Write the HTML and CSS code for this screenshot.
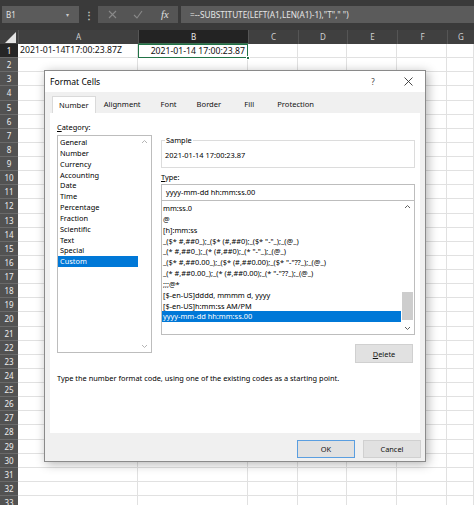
FILE: index.html
```html
<!DOCTYPE html>
<html lang="en">
<head>
    <meta charset="UTF-8">
    <title>Format Cells</title>
    <link rel="stylesheet" href="styles.css">
</head>
<body>
    <div class="toolbar">
        <div class="name-box">
            <span>B1</span>
            <span class="caret">▾</span>
        </div>
        <div class="grip">⋮</div>
        <div class="fx-group">
            <svg class="icon-cancel" width="9" height="9" viewBox="0 0 9 9">
                <path d="M1 1 L8 8 M8 1 L1 8" stroke="#8a8a8a" stroke-width="1.1" fill="none"/>
            </svg>
            <svg class="icon-enter" width="10" height="9" viewBox="0 0 10 9">
                <path d="M1 5 L4 8 L9 1" stroke="#8a8a8a" stroke-width="1.1" fill="none"/>
            </svg>
            <span class="fx">fx</span>
        </div>
        <div class="formula">=--SUBSTITUTE(LEFT(A1,LEN(A1)-1),"T"," ")</div>
    </div>

    <div class="sheet" id="sheet">
        <div class="sheet-row head-row">
            <div class="corner"></div>
            <div class="col-head col-a">A</div>
            <div class="col-head col-b selected">B</div>
            <div class="col-head col-c">C</div>
            <div class="col-head col-d">D</div>
            <div class="col-head col-e">E</div>
            <div class="col-head col-f">F</div>
            <div class="col-head col-g">G</div>
        </div>
        <div class="sheet-row">
            <div class="row-head selected">1</div>
            <div class="cell col-a">2021-01-14T17:00:23.87Z</div>
            <div class="cell col-b active">2021-01-14 17:00:23.87<span class="handle"></span></div>
            <div class="cell col-c"></div>
            <div class="cell col-d"></div>
            <div class="cell col-e"></div>
            <div class="cell col-f"></div>
            <div class="cell col-g"></div>
        </div>
    </div>

    <div class="dialog">
        <div class="title-bar">
            <span class="title">Format Cells</span>
            <span class="help">?</span>
            <span class="close">
                <svg width="9" height="9" viewBox="0 0 9 9">
                    <path d="M0.5 0.5 L8.5 8.5 M8.5 0.5 L0.5 8.5" stroke="#333" stroke-width="0.9" fill="none"/>
                </svg>
            </span>
        </div>

        <div class="tabs">
            <div class="tab active">Number</div>
            <div class="tab">Alignment</div>
            <div class="tab">Font</div>
            <div class="tab">Border</div>
            <div class="tab">Fill</div>
            <div class="tab">Protection</div>
        </div>

        <div class="panel">
            <div class="panel-grid">
                <div class="field-label"><u>C</u>ategory:</div>
                <div class="listbox category-list">
                    <div class="items">
                        <div class="item">General</div>
                        <div class="item">Number</div>
                        <div class="item">Currency</div>
                        <div class="item">Accounting</div>
                        <div class="item">Date</div>
                        <div class="item">Time</div>
                        <div class="item">Percentage</div>
                        <div class="item">Fraction</div>
                        <div class="item">Scientific</div>
                        <div class="item">Text</div>
                        <div class="item">Special</div>
                        <div class="item selected">Custom</div>
                    </div>
                    <div class="scrollbar disabled">
                        <svg class="arrow" width="13" height="12" viewBox="0 0 13 12">
                            <path d="M4 7 L6.5 4.5 L9 7" stroke="currentColor" stroke-width="1" fill="none"/>
                        </svg>
                        <div class="track"></div>
                        <svg class="arrow" width="13" height="12" viewBox="0 0 13 12">
                            <path d="M4 5 L6.5 7.5 L9 5" stroke="currentColor" stroke-width="1" fill="none"/>
                        </svg>
                    </div>
                </div>

                <div class="right-col">
                    <fieldset class="sample">
                        <legend>Sample</legend>
                        <div class="sample-value">2021-01-14 17:00:23.87</div>
                    </fieldset>

                    <div class="type-label"><u>T</u>ype:</div>
                    <div class="type-input">yyyy-mm-dd hh:mm:ss.00</div>
                    <div class="listbox format-list">
                        <div class="items">
                            <div class="item">mm:ss.0</div>
                            <div class="item">@</div>
                            <div class="item">[h]:mm:ss</div>
                            <div class="item">_($* #,##0_);_($* (#,##0);_($* "-"_);_(@_)</div>
                            <div class="item">_(* #,##0_);_(* (#,##0);_(* "-"_);_(@_)</div>
                            <div class="item">_($* #,##0.00_);_($* (#,##0.00);_($* "-"??_);_(@_)</div>
                            <div class="item">_(* #,##0.00_);_(* (#,##0.00);_(* "-"??_);_(@_)</div>
                            <div class="item">;;;@*</div>
                            <div class="item">[$-en-US]dddd, mmmm d, yyyy</div>
                            <div class="item">[$-en-US]h:mm:ss AM/PM</div>
                            <div class="item selected">yyyy-mm-dd hh:mm:ss.00</div>
                        </div>
                        <div class="scrollbar">
                            <svg class="arrow" width="13" height="12" viewBox="0 0 13 12">
                                <path d="M4 7 L6.5 4.5 L9 7" stroke="currentColor" stroke-width="1" fill="none"/>
                            </svg>
                            <div class="track"><div class="thumb"></div></div>
                            <svg class="arrow" width="13" height="12" viewBox="0 0 13 12">
                                <path d="M4 5 L6.5 7.5 L9 5" stroke="currentColor" stroke-width="1" fill="none"/>
                            </svg>
                        </div>
                    </div>
                    <button class="btn btn-delete"><u>D</u>elete</button>
                </div>
            </div>

            <p class="description">Type the number format code, using one of the existing codes as a starting point.</p>
        </div>

        <div class="footer">
            <button class="btn btn-ok">OK</button>
            <button class="btn">Cancel</button>
        </div>
    </div>

    <script>
        // empty rows 2..33 of the sheet
        const sheet = document.getElementById('sheet');
        const cols = ['a', 'b', 'c', 'd', 'e', 'f', 'g'];
        for (let i = 2; i <= 33; i++) {
            const row = document.createElement('div');
            row.className = 'sheet-row';
            row.innerHTML = '<div class="row-head">' + i + '</div>' +
                cols.map(c => '<div class="cell col-' + c + '"></div>').join('');
            sheet.appendChild(row);
        }
    </script>
</body>
</html>
```

FILE: styles.css
```css
* {
    margin: 0;
    padding: 0;
    box-sizing: border-box;
}

body {
    width: 474px;
    height: 505px;
    overflow: hidden;
    position: relative;
    background: #fff;
    font-family: "Noto Sans", "Open Sans", sans-serif;
}

/* formula bar */
.toolbar {
    height: 30px;
    background: #3a3a3a;
    display: flex;
    align-items: center;
    padding: 0 0 1px 2px;
}

.name-box {
    width: 77px;
    height: 17px;
    background: #5b5b5b;
    color: #e2e2e2;
    font-size: 8px;
    display: flex;
    align-items: center;
    justify-content: space-between;
    padding: 0 10px 0 4px;
}

.caret {
    font-size: 6px;
    color: #c8c8c8;
}

.grip {
    width: 19px;
    text-align: center;
    color: #c0c0c0;
    font-size: 10px;
    font-weight: bold;
}

.fx-group {
    width: 80px;
    height: 17px;
    background: #555;
    display: flex;
    align-items: center;
}

.icon-cancel {
    margin-left: 10px;
}

.icon-enter {
    margin-left: 16px;
}

.fx {
    margin-left: 18px;
    font-family: "Liberation Serif", serif;
    font-style: italic;
    font-size: 10.5px;
    color: #e0e0e0;
}

.formula {
    flex: 1;
    margin-left: 3px;
    height: 17px;
    background: #5b5b5b;
    color: #e6e6e6;
    font-size: 8.2px;
    padding-left: 9px;
    display: flex;
    align-items: center;
    white-space: nowrap;
}

/* grid */
.sheet-row {
    display: flex;
    height: 14.13px;
}

.head-row {
    height: 14px;
    background: #404040;
}

.corner {
    width: 18px;
    position: relative;
}

.corner::after {
    content: "";
    position: absolute;
    left: 5px;
    top: 2px;
    width: 11px;
    height: 11px;
    background: #e4e4e4;
    clip-path: polygon(100% 0, 100% 100%, 0 100%);
}

.col-head {
    color: #cfcfcf;
    font-size: 8px;
    line-height: 14px;
    text-align: center;
    border-left: 1px solid #555;
}

.col-head.selected {
    background: #232323;
    color: #e8e8e8;
    border-bottom: 1px solid #3d6e52;
}

.col-a { width: 120px; }
.col-b { width: 110px; }
.col-c { width: 50px; }
.col-d { width: 49px; }
.col-e { width: 50px; }
.col-f { width: 50px; }
.col-g { flex: 1; }

.row-head {
    width: 18px;
    flex-shrink: 0;
    background: #525252;
    color: #ececec;
    font-size: 8px;
    line-height: 13px;
    text-align: center;
    border-bottom: 1px solid #6a6a6a;
}

.row-head.selected {
    background: #262626;
    color: #fff;
}

.cell {
    flex-shrink: 0;
    border-right: 1px solid #e1e1e1;
    border-bottom: 1px solid #e1e1e1;
    font-size: 8.7px;
    line-height: 13px;
    padding: 0 2px;
    white-space: nowrap;
    color: #111;
}

.cell.active {
    position: relative;
    text-align: right;
    border: 1px solid #217346;
}

.handle {
    position: absolute;
    right: -3px;
    bottom: -3px;
    width: 4px;
    height: 4px;
    background: #217346;
    border: 1px solid #fff;
}

/* dialog */
.dialog {
    position: absolute;
    left: 44px;
    top: 70px;
    width: 382px;
    height: 392px;
    background: #f0f0f0;
    border: 1px solid #8a8a8a;
    box-shadow: 2px 2px 10px rgba(0, 0, 0, 0.3);
    font-size: 7.4px;
    color: #000;
    display: flex;
    flex-direction: column;
}

.title-bar {
    height: 21px;
    flex-shrink: 0;
    background: #fff;
    display: flex;
    align-items: center;
    padding: 0 2px 0 5px;
    font-size: 8.6px;
}

.title {
    flex: 1;
}

.help {
    width: 20px;
    margin-right: 10px;
    text-align: center;
    color: #444;
    font-size: 8px;
}

.close {
    width: 30px;
    display: flex;
    justify-content: center;
}

.tabs {
    height: 21px;
    flex-shrink: 0;
    display: flex;
    align-items: flex-end;
    padding-left: 7px;
    font-size: 7.6px;
}

.tab {
    height: 17px;
    line-height: 17px;
    min-width: 40px;
    padding: 0 8px;
    text-align: center;
    color: #111;
}

.tab.active {
    min-width: 0;
    padding: 0 6px;
    background: #fff;
    border: 1px solid #dadada;
    border-bottom: none;
    line-height: 16px;
}

.panel {
    height: 320px;
    flex-shrink: 0;
    margin: 0 5px;
    background: #fff;
    padding: 8px 5px 0 7px;
}

.panel-grid {
    display: grid;
    grid-template-columns: 95px 254px;
    grid-template-rows: 14px auto;
    column-gap: 9px;
    align-items: start;
}

.field-label {
    grid-column: 1 / 3;
    line-height: 13px;
}

.listbox {
    display: flex;
    border: 1px solid #bdbdbd;
    background: #fff;
}

.items {
    flex: 1;
    padding-top: 1px;
    overflow: hidden;
}

.item {
    height: 10.85px;
    line-height: 10.85px;
    padding-left: 2px;
    white-space: nowrap;
}

.item.selected {
    background: #0078d7;
    color: #fff;
}

.category-list {
    height: 218px;
}

.scrollbar {
    width: 13px;
    display: flex;
    flex-direction: column;
    color: #606060;
}

.scrollbar.disabled {
    color: #b4b4b4;
}

.track {
    flex: 1;
    display: flex;
    flex-direction: column;
    justify-content: flex-end;
    padding: 0 1px 2px;
}

.thumb {
    height: 28px;
    background: #cdcdcd;
}

.right-col {
    display: flex;
    flex-direction: column;
}

.sample {
    border: 1px solid #dcdcdc;
    padding: 0 3px 5px 3px;
    height: 33px;
}

.sample legend {
    padding: 0 1px;
    line-height: 11px;
}

.sample-value {
    margin: 4px 0 0 0;
    line-height: 11px;
}

.type-label {
    margin-top: 3px;
    line-height: 13px;
}

.type-input {
    height: 17px;
    border: 1px solid #bdbdbd;
    padding-left: 4px;
    line-height: 15px;
}

.format-list {
    height: 134px;
    border-top: none;
}

.format-list .items {
    padding-top: 2px;
}

.format-list .item {
    padding-left: 1px;
}

.btn {
    width: 58px;
    height: 18px;
    background: #e1e1e1;
    border: 1px solid #d0d0d0;
    font-family: inherit;
    font-size: 7.4px;
    color: #111;
}

.btn-delete {
    align-self: flex-end;
    margin: 9px 2px 0 0;
    height: 19px;
}

.btn-ok {
    border-color: #5a9ee0;
}

.description {
    margin-top: 10px;
    line-height: 11px;
}

.footer {
    flex: 1;
    display: flex;
    justify-content: flex-end;
    gap: 8px;
    padding: 7px 4px 0 0;
}
```
